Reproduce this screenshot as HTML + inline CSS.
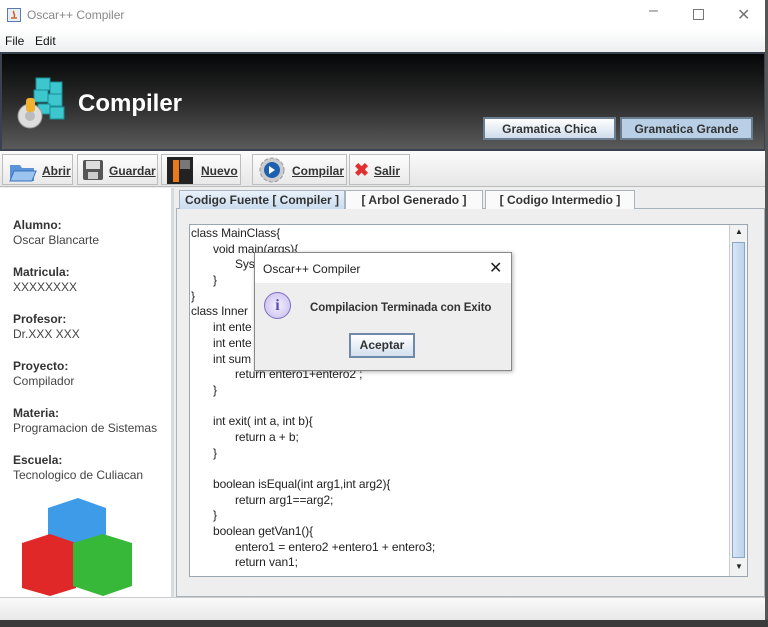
<!DOCTYPE html>
<html><head><meta charset="utf-8"><style>
*{margin:0;padding:0;box-sizing:border-box}
body{width:768px;height:627px;overflow:hidden;background:#eeeeee;font-family:"Liberation Sans",Arial,sans-serif;position:relative;color:#222}
.a{position:absolute}
.title{left:0;top:0;width:768px;height:30px;background:#fff;font-size:12px;color:#888}
.menu{left:0;top:30px;width:768px;height:22px;background:linear-gradient(#fff,#eceef0);font-size:12px;color:#111}
.banner{left:0;top:52px;width:766px;height:99px;background:linear-gradient(#050607,#2a2a2a 50%,#5a5a5a);border:2px solid #3a4250}
.gbtn{height:23px;font-size:12px;font-weight:bold;color:#333;text-align:center;line-height:21px;border:2px solid #6b7d90}
.tb{left:0;top:151px;width:766px;height:36px;background:linear-gradient(#fbfbfb,#e6e6e6);border-bottom:1px solid #bbb}
.btn{top:3px;height:31px;border:1px solid #bdbdbd;background:linear-gradient(#fdfdfd,#e9e9e9);font-size:12px;font-weight:bold;color:#333}
.btn span{position:absolute;top:9px;text-decoration:underline}
.left{left:0;top:188px;width:174px;height:409px;background:#fff;border-right:3px solid #d6dbe0}
.lbl{font-size:12px;left:13px}
.lbl b{display:block;color:#333}
.lbl div{color:#444;margin-top:1px}
.tab{top:190px;height:19px;font-size:12px;font-weight:bold;color:#333;text-align:center;line-height:18px;border:1px solid #a9b3bd;border-bottom:none;background:#fafafa}
.panel{left:176px;top:208px;width:589px;height:389px;border:1px solid #a9b3bd;background:#eeeeee}
.ta{left:189px;top:224px;width:559px;height:353px;background:#fff;border:1px solid #9aa6b2}
.code{left:191px;top:226px;font-size:12px;line-height:15.7px;color:#222;white-space:pre;letter-spacing:-0.1px}
.code div{height:15.7px}
.i1{padding-left:22px}.i2{padding-left:44px}
.dlg{left:254px;top:252px;width:258px;height:119px;background:#eeeeee;border:1px solid #888;box-shadow:1px 1px 4px rgba(0,0,0,.3)}
</style></head><body>
<div class="a title"><svg class="a" style="left:7px;top:8px" width="14" height="14"><rect x=".5" y=".5" width="13" height="13" fill="#e8eef6" stroke="#5a7bb0"/><path d="M4 10h6M7 3c-2 2 2 3 0 6" stroke="#d06020" fill="none" stroke-width="1.5"/></svg><span class="a" style="left:27px;top:8px">Oscar++ Compiler</span>
<span class="a" style="left:649px;top:2px;font-size:16px;color:#777">–</span>
<div class="a" style="left:693px;top:9px;width:11px;height:11px;border:1px solid #777"></div>
<span class="a" style="left:737px;top:5px;font-size:16px;color:#777">✕</span></div>
<div class="a menu"><span class="a" style="left:5px;top:4px">File</span><span class="a" style="left:35px;top:4px">Edit</span></div>
<div class="a banner">
<svg class="a" style="left:12px;top:20px" width="60" height="58"><g fill="#3cc7cf" stroke="#1a8e95"><rect x="22" y="4" width="14" height="12"/><rect x="36" y="8" width="12" height="12"/><rect x="20" y="16" width="14" height="12"/><rect x="34" y="20" width="14" height="12"/><rect x="36" y="33" width="14" height="12"/><rect x="24" y="30" width="12" height="10"/></g><circle cx="16" cy="42" r="12" fill="#ddd" stroke="#999"/><circle cx="16" cy="42" r="5" fill="#bbb"/><rect x="12" y="24" width="9" height="14" rx="3" fill="#f0b030"/></svg>
<div class="a" style="left:76px;top:36px;color:#fff;font-size:24px;font-weight:bold">Compiler</div>
<div class="a gbtn" style="left:481px;top:63px;width:133px;background:linear-gradient(#fff,#cfdceb)">Gramatica Chica</div>
<div class="a gbtn" style="left:618px;top:63px;width:133px;background:#b9cfe6">Gramatica Grande</div>
</div>
<div class="a tb">
<div class="a btn" style="left:2px;width:71px"><svg class="a" style="left:5px;top:4px" width="30" height="24"><path d="M2 6h10l2 3h12v13H2z" fill="#5a93d8"/><path d="M6 12h22l-4 10H2z" fill="#9cc4f0" stroke="#3a70b8"/></svg><span style="left:39px">Abrir</span></div>
<div class="a btn" style="left:77px;width:81px"><svg class="a" style="left:4px;top:4px" width="22" height="22"><rect x="1" y="1" width="20" height="20" rx="2" fill="#555"/><rect x="4" y="2" width="14" height="8" fill="#ddd"/><rect x="6" y="13" width="10" height="7" fill="#ccc"/></svg><span style="left:31px">Guardar</span></div>
<div class="a btn" style="left:161px;width:80px"><svg class="a" style="left:5px;top:2px" width="26" height="27"><rect x="0" y="0" width="26" height="27" fill="#222"/><rect x="6" y="3" width="6" height="22" fill="#e87a1a"/><rect x="13" y="3" width="10" height="9" fill="#777"/></svg><span style="left:39px">Nuevo</span></div>
<div class="a btn" style="left:252px;width:95px"><svg class="a" style="left:4px;top:2px" width="30" height="27"><circle cx="15" cy="13" r="12" fill="#ccc" stroke="#999" stroke-dasharray="4 2"/><circle cx="15" cy="13" r="8" fill="#1f5fb0"/><path d="M12 9l6 4-6 4z" fill="#fff"/></svg><span style="left:39px">Compilar</span></div>
<div class="a btn" style="left:349px;width:61px"><span style="left:4px;top:5px;text-decoration:none;color:#e03030;font-size:18px">✖</span><span style="left:24px">Salir</span></div>
</div>
<div class="a left">
<div class="a lbl" style="top:30px"><b>Alumno:</b><div>Oscar Blancarte</div></div>
<div class="a lbl" style="top:77px"><b>Matricula:</b><div>XXXXXXXX</div></div>
<div class="a lbl" style="top:124px"><b>Profesor:</b><div>Dr.XXX XXX</div></div>
<div class="a lbl" style="top:171px"><b>Proyecto:</b><div>Compilador</div></div>
<div class="a lbl" style="top:218px"><b>Materia:</b><div>Programacion de Sistemas</div></div>
<div class="a lbl" style="top:265px"><b>Escuela:</b><div>Tecnologico de Culiacan</div></div>
<svg class="a" style="left:18px;top:310px" width="120" height="100"><polygon points="30,10 60,0 88,10 88,45 60,55 30,45" fill="#3d9be8"/><polygon points="4,45 32,36 58,45 58,90 32,98 4,90" fill="#e02828"/><polygon points="55,45 85,36 114,45 114,88 85,98 55,88" fill="#38b838"/></svg>
</div>
<div class="a panel"></div>
<div class="a tab" style="left:179px;width:166px;background:linear-gradient(#eaf2fb,#c9dcef)">Codigo Fuente [ Compiler ]</div>
<div class="a tab" style="left:345px;width:138px">[ Arbol Generado ]</div>
<div class="a tab" style="left:485px;width:150px">[ Codigo Intermedio ]</div>
<div class="a ta"></div>
<div class="a" style="left:729px;top:225px;width:18px;height:351px;background:#f2f2f2;border-left:1px solid #ccc"><div class="a" style="left:2px;top:17px;width:13px;height:316px;background:linear-gradient(90deg,#d7e6f5,#bcd3ec);border:1px solid #8aa6c4"></div><span class="a" style="left:5px;top:2px;font-size:8px">▲</span><span class="a" style="left:5px;top:337px;font-size:8px">▼</span></div>
<div class="a code"><div>class MainClass{</div><div class="i1">void main(args){</div><div class="i2">Sys</div><div class="i1">}</div><div>}</div><div>class Inner</div><div class="i1">int ente</div><div class="i1">int ente</div><div class="i1">int sum</div><div class="i2">return entero1+entero2 ;</div><div class="i1">}</div><div></div><div class="i1">int exit( int a, int b){</div><div class="i2">return a + b;</div><div class="i1">}</div><div></div><div class="i1">boolean isEqual(int arg1,int arg2){</div><div class="i2">return arg1==arg2;</div><div class="i1">}</div><div class="i1">boolean getVan1(){</div><div class="i2">entero1 = entero2 +entero1 + entero3;</div><div class="i2">return van1;</div></div>
<div class="a dlg">
<div class="a" style="left:0;top:0;width:256px;height:30px;background:#fff;font-size:12px;color:#222"><span class="a" style="left:8px;top:9px">Oscar++ Compiler</span><span class="a" style="left:234px;top:5px;font-size:16px">✕</span></div>
<div class="a" style="left:9px;top:39px;width:27px;height:27px;border-radius:50%;background:radial-gradient(#f4f0ff,#c4b8ec);border:1px solid #7d6fc0;color:#5b4cb0;text-align:center;font:bold 16px/25px 'Liberation Serif',serif">i</div>
<div class="a" style="left:55px;top:49px;font-size:11.5px;font-weight:bold;color:#333;letter-spacing:-0.1px">Compilacion Terminada con Exito</div>
<div class="a" style="left:94px;top:80px;width:66px;height:25px;border:2px solid #6e8aa8;background:linear-gradient(#fff,#d3e0ee);font-size:12px;font-weight:bold;text-align:center;line-height:21px;color:#333">Aceptar</div>
</div>
<div class="a" style="left:0;top:597px;width:768px;height:23px;background:linear-gradient(#fafafa,#e8e8e8);border-top:1px solid #ccc"></div>
<div class="a" style="left:0;top:620px;width:768px;height:7px;background:#3a3a3a"></div>
<div class="a" style="left:765px;top:0;width:3px;height:620px;background:#555"></div>
</body></html>
